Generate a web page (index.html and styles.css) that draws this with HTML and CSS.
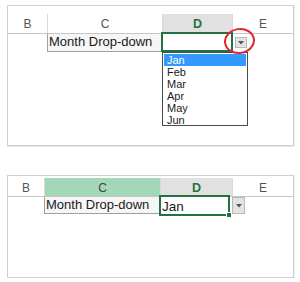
FILE: index.html
```html
<!DOCTYPE html>
<html>
<head>
<meta charset="utf-8">
<link rel="stylesheet" href="styles.css">
</head>
<body>
<div class="panel p1">
  <div class="hdr">
    <div class="h hb">B</div>
    <div class="h hc">C</div>
    <div class="h hd sel">D</div>
    <div class="h he">E</div>
  </div>
  <div class="row">
    <div class="sp"></div>
    <div class="label">Month Drop-down</div>
    <div class="active"></div>
    <div class="btn"><svg width="6" height="4" viewBox="0 0 6 4"><path d="M0 0H6L3 3.5Z" fill="#555"/></svg></div>
  </div>
  <ul class="list">
    <li class="on">Jan</li>
    <li>Feb</li>
    <li>Mar</li>
    <li>Apr</li>
    <li>May</li>
    <li>Jun</li>
  </ul>
  <div class="ring"></div>
</div>

<div class="panel p2">
  <div class="hdr">
    <div class="h hb">B</div>
    <div class="h hc green">C</div>
    <div class="h hd sel">D</div>
    <div class="h he">E</div>
  </div>
  <div class="row">
    <div class="sp"></div>
    <div class="label">Month Drop-down</div>
    <div class="active"><span class="val">Jan</span><span class="handle"></span></div>
    <div class="btn"><svg width="6" height="4" viewBox="0 0 6 4"><path d="M0 0H6L3 3.5Z" fill="#555"/></svg></div>
  </div>
</div>
</body>
</html>
```

FILE: styles.css
```css
html, body {
  margin: 0;
  padding: 0;
  background: #fff;
}
body {
  font-family: "Liberation Sans", Arial, sans-serif;
  color: #222;
}
.panel {
  position: relative;
  box-sizing: border-box;
  width: 287px;
  margin-left: 7px;
  border: 1px solid #d0d0d0;
  box-shadow: 0 1px 0 #e6e6e6, 1px 0 0 #eeeeee;
}
.p1 {
  margin-top: 5px;
  height: 141px;
}
.p2 {
  margin-top: 29px;
  height: 103px;
}
.hdr {
  display: flex;
  border-bottom: 1px solid #c6c6c6;
  height: 19px;
  box-sizing: border-box;
}
.p1 .hdr {
  margin-top: 8px;
  height: 20px;
}
.p2 .hdr {
  margin-top: 2px;
  height: 19px;
}
.h {
  box-sizing: border-box;
  border-right: 1px solid #d9d9d9;
  font-size: 12px;
  color: #555;
  display: flex;
  align-items: center;
  justify-content: center;
  padding-top: 1px;
}
.h.he {
  flex: 1;
  border-right: none;
}
.p1 .hb { width: 40px; }
.p1 .hc { width: 115px; }
.p1 .hd { width: 70px; }
.p2 .hb { width: 37px; }
.p2 .hc { width: 116px; }
.p2 .hd { width: 72px; }
.h.sel {
  background: #e1e1e1;
  color: #217346;
  font-weight: bold;
  font-size: 12.5px;
}
.h.green {
  background: #a2d7b8;
  color: #444;
}
.row {
  display: flex;
  align-items: flex-start;
}
.sp {
  flex: none;
}
.p1 .sp { width: 39px; }
.p2 .sp { width: 36px; }
.label {
  box-sizing: border-box;
  border: 1px solid #a0a0a0;
  border-top: none;
  background: #f6f6f6;
  font-size: 13px;
  color: #1a1a1a;
  white-space: nowrap;
  overflow: hidden;
  padding-left: 1px;
  line-height: 16px;
}
.p1 .label { width: 116px; height: 18px; }
.p2 .label { width: 117px; height: 17px; }
.active {
  position: relative;
  box-sizing: border-box;
  border: 2px solid #217346;
  background: #fff;
  flex: none;
}
.p1 .active {
  width: 72px;
  height: 20px;
  margin-left: -2px;
  margin-top: -2px;
}
.p2 .active {
  width: 71px;
  height: 21px;
  margin-left: -2px;
  margin-top: -2px;
}
.val {
  font-size: 13.5px;
  line-height: 17px;
  padding-left: 1px;
  color: #1a1a1a;
}
.handle {
  position: absolute;
  right: -4px;
  bottom: -4px;
  width: 4px;
  height: 4px;
  background: #217346;
  border: 1px solid #fff;
}
.btn {
  box-sizing: border-box;
  flex: none;
  background: #e3e3e3;
  border: 1px solid #b8b8b8;
  display: flex;
  align-items: center;
  justify-content: center;
}
.p1 .btn {
  width: 12px;
  height: 11px;
  margin-left: 2px;
  margin-top: 3px;
}
.p2 .btn {
  width: 13px;
  height: 17px;
  margin-left: 2px;
  margin-top: 0;
}
.list {
  position: absolute;
  left: 154px;
  top: 46px;
  width: 86px;
  height: 74px;
  box-sizing: border-box;
  margin: 0;
  padding: 0 1px;
  list-style: none;
  border: 1px solid #4a4a4a;
  background: #fff;
  font-size: 11px;
  color: #1a1a1a;
}
.list li {
  height: 12px;
  line-height: 12px;
  padding-left: 3px;
}
.list li.on {
  background: #3399ff;
  color: #fff;
  margin-top: 1px;
}
.ring {
  position: absolute;
  left: 216px;
  top: 22px;
  width: 31px;
  height: 26px;
  box-sizing: border-box;
  border: 2px solid #e2242c;
  border-radius: 50%;
  transform: rotate(-8deg);
}
```
